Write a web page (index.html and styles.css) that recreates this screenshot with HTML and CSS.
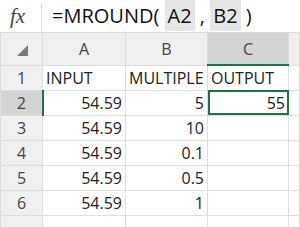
FILE: index.html
```html
<!DOCTYPE html>
<html lang="en">
  <head>
    <meta charset="UTF-8">
    <title>MROUND</title>
    <link rel="stylesheet" href="styles.css">
</head>
<body>

<div class="formula-bar">
  <div class="fx">fx</div>
  <div class="formula">=MROUND( <span class="ref">A2</span> , <span class="ref">B2</span> )</div>
</div>

<table class="sheet">
  <colgroup>
    <col class="c-head">
    <col class="c-a">
    <col class="c-b">
    <col class="c-c">
    <col>
  </colgroup>
  <tr class="col-heads">
    <th class="corner"><span class="tri"></span></th>
    <th>A</th>
    <th>B</th>
    <th class="sel-col">C</th>
    <th></th>
  </tr>
  <tr>
    <th class="row-head">1</th>
    <td>INPUT</td>
    <td>MULTIPLE</td>
    <td>OUTPUT</td>
    <td></td>
  </tr>
  <tr>
    <th class="row-head sel-row">2</th>
    <td class="num">54.59</td>
    <td class="num">5</td>
    <td class="num active">55</td>
    <td></td>
  </tr>
  <tr>
    <th class="row-head">3</th>
    <td class="num">54.59</td>
    <td class="num">10</td>
    <td></td>
    <td></td>
  </tr>
  <tr>
    <th class="row-head">4</th>
    <td class="num">54.59</td>
    <td class="num">0.1</td>
    <td></td>
    <td></td>
  </tr>
  <tr>
    <th class="row-head">5</th>
    <td class="num">54.59</td>
    <td class="num">0.5</td>
    <td></td>
    <td></td>
  </tr>
  <tr>
    <th class="row-head">6</th>
    <td class="num">54.59</td>
    <td class="num">1</td>
    <td></td>
    <td></td>
  </tr>
  <tr class="last">
    <th class="row-head"></th>
    <td></td>
    <td></td>
    <td></td>
    <td></td>
  </tr>
</table>

</body>
</html>
```

FILE: styles.css
```css
* {
  box-sizing: border-box;
}

body {
  margin: 0;
  background-color: #fff;
  font-family: "Open Sans", Arial, sans-serif;
  color: #222;
  width: 300px;
  height: 227px;
  overflow: hidden;
}

.formula-bar {
  display: flex;
  height: 33px;
  align-items: stretch;
  border-bottom: 1px solid #dcdcdc;
}

.fx {
  width: 42px;
  margin: 3px 0 0;
  border-right: 1px solid #dcdcdc;
  font-family: "Liberation Serif", serif;
  font-style: italic;
  font-size: 21px;
  color: #444;
  padding-left: 10px;
  line-height: 26px;
}

.formula {
  padding-left: 10px;
  font-size: 20px;
  line-height: 32px;
  color: #111;
  white-space: pre;
}

.ref {
  background-color: #e6e6e6;
  padding: 2px 3px;
}

.sheet {
  border-collapse: collapse;
  table-layout: fixed;
  width: 300px;
  font-size: 16px;
}

.c-head { width: 42px; }
.c-a { width: 83px; }
.c-b { width: 82px; }
.c-c { width: 81px; }

.sheet th,
.sheet td {
  border: 1px solid #dedede;
  padding: 0 3px;
  height: 25px;
  white-space: nowrap;
  overflow: visible;
}

.sheet th {
  font-weight: normal;
  color: #444;
  background-color: #f0f0f0;
}

.col-heads th {
  height: 32px;
  border-top: none;
}

.sheet td {
  text-align: left;
}

.sheet td.num {
  text-align: right;
}

.row-head {
  text-align: center;
}

.corner {
  position: relative;
}

.tri {
  position: absolute;
  right: 14px;
  bottom: 9px;
  width: 0;
  height: 0;
  border-left: 11px solid transparent;
  border-bottom: 11px solid #7a7a7a;
}

.sel-col {
  background-color: #d4d4d4 !important;
  border-bottom: 2px solid #217346 !important;
}

.sel-row {
  background-color: #d4d4d4 !important;
  border-right: 2px solid #217346 !important;
}

.active {
  outline: 2px solid #217346;
  outline-offset: -2px;
}

.last th,
.last td {
  height: 12px;
}
```
